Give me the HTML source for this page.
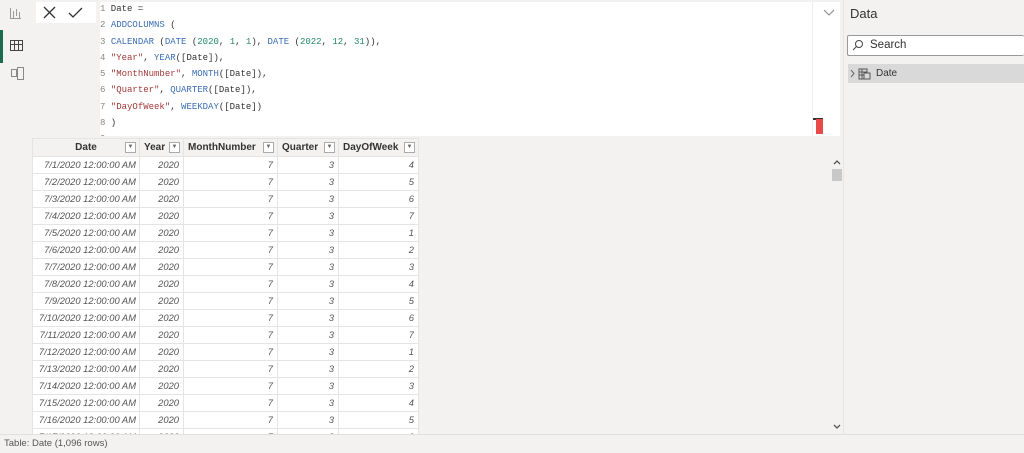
<!DOCTYPE html>
<html><head><style>
*{margin:0;padding:0;box-sizing:border-box}
html,body{width:1024px;height:453px;overflow:hidden}
body{background:#f3f2f1;position:relative;font-family:"Liberation Sans",sans-serif}
.abs{position:absolute}
.code{font-family:"Liberation Mono",monospace;font-size:9px;color:#333;line-height:16.3px;white-space:pre}
.k{color:#3b6db3}.s{color:#a33a3a}.n{color:#1f8a6a}.ln{color:#888}
table{border-collapse:collapse;font-size:10px;color:#444;table-layout:fixed}
td,th{border:1px solid #e4e4e4;height:17px;padding:0 4px;font-style:italic;text-align:right;color:#555;white-space:nowrap;overflow:hidden;vertical-align:middle}
td{font-size:9.4px;line-height:16px}
td:first-child{padding:0 3px}
th{font-style:normal;font-weight:bold;text-align:center;background:#f3f2f1;color:#333;position:relative;height:18px}
th span{position:absolute;right:3px;top:3px;width:11px;height:11px;border:1px solid #aaa;background:#fff;font-size:6px;line-height:9px;color:#666;text-align:center}
tr td{background:#fff}
</style></head><body>
<div class="abs" style="left:10px;top:8px;width:11px;height:11px;border-left:1px solid #999;border-bottom:1px solid #999"></div>
<div class="abs" style="left:13px;top:11px;width:1px;height:7px;background:#999;box-shadow:3px -2px 0 #999,6px 1px 0 #999"></div>
<div class="abs" style="left:0;top:30px;width:3px;height:33px;background:#1c6b4e"></div>
<div class="abs" style="left:10px;top:40px;width:13px;height:11px;border:1px solid #444;background:linear-gradient(#444,#444) 0 3px/100% 1px no-repeat,linear-gradient(90deg,transparent 3px,#444 3px,#444 4px,transparent 4px,transparent 7px,#444 7px,#444 8px,transparent 8px)"></div>
<div class="abs" style="left:11px;top:69px;width:6px;height:8px;border:1px solid #888"></div>
<div class="abs" style="left:17px;top:67px;width:7px;height:13px;border:1px solid #888"></div>
<div class="abs" style="left:36px;top:2px;width:60px;height:21px;background:#fff"></div>
<svg class="abs" style="left:42px;top:5px" width="50" height="15"><path d="M2 2 L13 13 M13 2 L2 13" stroke="#333" stroke-width="1.3"/><path d="M27 8 L31 12 L40 3" stroke="#333" stroke-width="1.3" fill="none"/></svg>
<div class="abs" style="left:100px;top:2px;width:740px;height:134px;background:#fff;overflow:hidden">
<div class="abs code" style="left:0;top:-1px"><span class="ln">1</span> Date =
<span class="ln">2</span> <span class="k">ADDCOLUMNS</span> (
<span class="ln">3</span> <span class="k">CALENDAR</span> (<span class="k">DATE</span> (<span class="n">2020</span>, <span class="n">1</span>, <span class="n">1</span>), <span class="k">DATE</span> (<span class="n">2022</span>, <span class="n">12</span>, <span class="n">31</span>)),
<span class="ln">4</span> <span class="s">"Year"</span>, <span class="k">YEAR</span>([Date]),
<span class="ln">5</span> <span class="s">"MonthNumber"</span>, <span class="k">MONTH</span>([Date]),
<span class="ln">6</span> <span class="s">"Quarter"</span>, <span class="k">QUARTER</span>([Date]),
<span class="ln">7</span> <span class="s">"DayOfWeek"</span>, <span class="k">WEEKDAY</span>([Date])
<span class="ln">8</span> )
<span class="ln">9</span></div>
</div>
<div class="abs" style="left:812px;top:2px;width:1px;height:134px;background:#eee"></div>
<svg class="abs" style="left:822px;top:8px" width="14" height="10"><path d="M2 2 L7 7 L12 2" stroke="#888" fill="none"/></svg>
<div class="abs" style="left:813px;top:118px;width:10px;height:2px;background:#333"></div>
<div class="abs" style="left:816px;top:119px;width:7px;height:15px;background:#e84a4a"></div>
<div class="abs" style="left:843px;top:0;width:1px;height:435px;background:#e6e6e6"></div>
<div class="abs" style="left:850px;top:6px;font-size:13px;color:#333">Data</div>
<div class="abs" style="left:847px;top:35px;width:177px;height:21px;background:#fff;border:1px solid #999;border-right:none;border-radius:2px"></div>
<svg class="abs" style="left:852px;top:39px" width="12" height="12"><circle cx="7" cy="5" r="3.5" stroke="#444" fill="none"/><path d="M4.5 7.5 L1 11" stroke="#444"/></svg>
<div class="abs" style="left:870px;top:39px;font-size:11.5px;color:#333">Search</div>
<div class="abs" style="left:848px;top:64px;width:176px;height:19px;background:#d9d9d9"></div>
<svg class="abs" style="left:850px;top:68px" width="30" height="12"><path d="M1 2 L4 5.5 L1 9" stroke="#666" fill="none"/><rect x="9" y="1" width="8" height="10" fill="none" stroke="#555"/><path d="M9 4H17M9 7H17M12 1V11" stroke="#555"/><rect x="14" y="5" width="6" height="6" fill="#d9d9d9" stroke="#555"/></svg>
<div class="abs" style="left:876px;top:68px;font-size:10px;color:#333">Date</div>
<div class="abs" style="left:32px;top:138px;width:390px;height:296px;overflow:hidden">
<table style="width:386px">
<colgroup><col style="width:107px"><col style="width:44px"><col style="width:94px"><col style="width:61px"><col style="width:80px"></colgroup>
<tr><th style="text-align:center">Date<span>▼</span></th><th style="text-align:left">Year<span>▼</span></th><th style="text-align:left">MonthNumber<span>▼</span></th><th style="text-align:left">Quarter<span>▼</span></th><th style="text-align:left">DayOfWeek<span>▼</span></th></tr>
<tr><td>7/1/2020 12:00:00 AM</td><td>2020</td><td>7</td><td>3</td><td>4</td></tr>
<tr><td>7/2/2020 12:00:00 AM</td><td>2020</td><td>7</td><td>3</td><td>5</td></tr>
<tr><td>7/3/2020 12:00:00 AM</td><td>2020</td><td>7</td><td>3</td><td>6</td></tr>
<tr><td>7/4/2020 12:00:00 AM</td><td>2020</td><td>7</td><td>3</td><td>7</td></tr>
<tr><td>7/5/2020 12:00:00 AM</td><td>2020</td><td>7</td><td>3</td><td>1</td></tr>
<tr><td>7/6/2020 12:00:00 AM</td><td>2020</td><td>7</td><td>3</td><td>2</td></tr>
<tr><td>7/7/2020 12:00:00 AM</td><td>2020</td><td>7</td><td>3</td><td>3</td></tr>
<tr><td>7/8/2020 12:00:00 AM</td><td>2020</td><td>7</td><td>3</td><td>4</td></tr>
<tr><td>7/9/2020 12:00:00 AM</td><td>2020</td><td>7</td><td>3</td><td>5</td></tr>
<tr><td>7/10/2020 12:00:00 AM</td><td>2020</td><td>7</td><td>3</td><td>6</td></tr>
<tr><td>7/11/2020 12:00:00 AM</td><td>2020</td><td>7</td><td>3</td><td>7</td></tr>
<tr><td>7/12/2020 12:00:00 AM</td><td>2020</td><td>7</td><td>3</td><td>1</td></tr>
<tr><td>7/13/2020 12:00:00 AM</td><td>2020</td><td>7</td><td>3</td><td>2</td></tr>
<tr><td>7/14/2020 12:00:00 AM</td><td>2020</td><td>7</td><td>3</td><td>3</td></tr>
<tr><td>7/15/2020 12:00:00 AM</td><td>2020</td><td>7</td><td>3</td><td>4</td></tr>
<tr><td>7/16/2020 12:00:00 AM</td><td>2020</td><td>7</td><td>3</td><td>5</td></tr>
<tr><td>7/17/2020 12:00:00 AM</td><td>2020</td><td>7</td><td>3</td><td>6</td></tr>
</table>
</div>
<svg class="abs" style="left:832px;top:158px" width="10" height="8"><path d="M2 6 L5 3 L8 6" stroke="#555" fill="none" stroke-width="1.3"/></svg>
<div class="abs" style="left:832px;top:169px;width:10px;height:12px;background:#c8c8c8"></div>
<svg class="abs" style="left:832px;top:423px" width="10" height="8"><path d="M2 2 L5 5 L8 2" stroke="#555" fill="none" stroke-width="1.3"/></svg>
<div class="abs" style="left:0;top:434px;width:1024px;height:19px;background:#f3f2f1;border-top:1px solid #e0e0e0"></div>
<div class="abs" style="left:4px;top:438px;font-size:9.5px;color:#555">Table: Date (1,096 rows)</div>
</body></html>
